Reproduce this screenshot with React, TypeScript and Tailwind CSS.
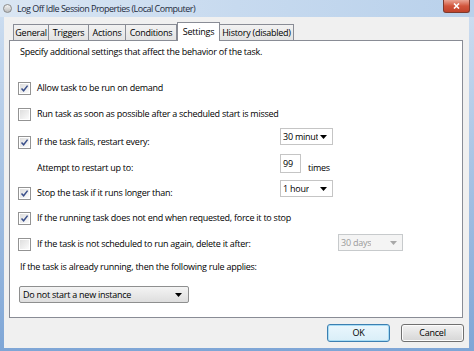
import React from 'react';

const Check: React.FC<{ checked?: boolean }> = ({ checked }) => (
  <div className="w-[13px] h-[13px] shrink-0 border border-[#939393] bg-white p-[1px]">
    <div className="w-full h-full bg-gradient-to-br from-[#dedede] to-[#fbfbfb] flex items-center justify-center">
      {checked && (
        <svg width="9" height="9" viewBox="0 0 9 9">
          <path d="M1.5 4.5 L3.6 6.8 L7.6 1.6" fill="none" stroke="#3a4f8a" strokeWidth="1.5" />
        </svg>
      )}
    </div>
  </div>
);

const CheckLine: React.FC<{ checked?: boolean; label: string }> = ({ checked, label }) => (
  <div className="h-4 flex items-center">
    <Check checked={checked} />
    <span className="ml-[6px] whitespace-nowrap">{label}</span>
  </div>
);

const Arrow: React.FC<{ color?: string }> = ({ color = '#000' }) => (
  <svg width="7" height="4" viewBox="0 0 7 4">
    <path d="M0 0 H7 L3.5 4 Z" fill={color} />
  </svg>
);

const Combo: React.FC<{ value: string; width: string; disabled?: boolean }> = ({ value, width, disabled }) => (
  <div
    className={`${width} h-[17px] flex items-center justify-between pl-[2px] pr-[5px] border ${
      disabled ? 'border-[#c7cacc] bg-[#f4f4f4] text-[#9a9a9a]' : 'border-[#c5c5c5] bg-white text-black'
    }`}
  >
    <span className="whitespace-nowrap overflow-hidden">{value}</span>
    <Arrow color={disabled ? '#a8a8a8' : '#000'} />
  </div>
);

const tabs = [
  { name: 'General', w: 'w-[36px]' },
  { name: 'Triggers', w: 'w-[41px]' },
  { name: 'Actions', w: 'w-[38px]' },
  { name: 'Conditions', w: 'w-[52px]' },
  { name: 'Settings', w: 'w-[43px]', active: true },
  { name: 'History (disabled)', w: 'w-[75px]' },
];

export default function App() {
  return (
    <div className="w-[474px] h-[351px] overflow-hidden flex flex-col bg-gradient-to-b from-[#cfdff1] to-[#7fa6d6] font-['Segoe_UI','Open_Sans',sans-serif] text-[9px] tracking-[-0.25px] leading-[16px] text-black">
      {/* title bar */}
      <div className="h-[17px] flex items-start bg-gradient-to-r from-[#dae6f3] via-[#c7daef] to-[#b9d1eb]">
        <div className="mt-[4px] ml-[3px] w-[9px] h-[9px] rounded-full border border-[#8a8a8a] bg-gradient-to-b from-[#f4f4f4] to-[#bcbcbc]" />
        <span className="ml-[5px] mt-[1px] text-[#1e2b3c] tracking-[-0.5px] whitespace-nowrap">Log Off Idle Session Properties (Local Computer)</span>
        <div className="ml-auto mr-[4px] w-[27px] h-[13px] rounded-b-[3px] border border-t-0 border-[#7d3a2e] bg-gradient-to-b from-[#e9a494] via-[#d1553c] to-[#c0432c] flex items-center justify-center">
          <svg width="7" height="6" viewBox="0 0 7 6">
            <path d="M1 0.5 L6 5.5 M6 0.5 L1 5.5" stroke="#fff" strokeWidth="1.6" />
          </svg>
        </div>
      </div>

      {/* window body */}
      <div className="flex-1 flex pl-[4px] pr-[5px] pb-[3px]">
        <div className="flex-1 bg-[#f0f0f0] flex flex-col pt-[5px] pb-[6px]">
          {/* tabs */}
          <div className="h-[18px] flex items-end pl-[9px] relative z-10">
            {tabs.map((t) =>
              t.active ? (
                <div
                  key={t.name}
                  className={`${t.w} h-[19px] -mb-px bg-white border border-b-0 border-[#898c95] flex items-center justify-center whitespace-nowrap`}
                >
                  {t.name}
                </div>
              ) : (
                <div
                  key={t.name}
                  className={`${t.w} h-[16px] bg-gradient-to-b from-[#f2f2f2] to-[#e3e3e3] border border-b-0 border-[#898c95] -ml-px first:ml-0 flex items-center justify-center whitespace-nowrap`}
                >
                  {t.name}
                </div>
              )
            )}
          </div>

          {/* panel */}
          <div className="ml-[5px] mr-[6px] h-[278px] bg-white border border-[#898c95] pl-[8px]">
            <div className="h-[39px] pt-[3px] pl-[2px] whitespace-nowrap">
              Specify additional settings that affect the behavior of the task.
            </div>
            <div className="h-[26px]">
              <CheckLine checked label="Allow task to be run on demand" />
            </div>
            <div className="h-[22px]">
              <CheckLine label="Run task as soon as possible after a scheduled start is missed" />
            </div>
            <div className="h-[26px] flex items-start">
              <div className="w-[262px] mt-[6px]">
                <CheckLine checked label="If the task fails, restart every:" />
              </div>
              <Combo value="30 minut" width="w-[53px]" />
            </div>
            <div className="h-[26px] flex items-start">
              <div className="w-[262px] mt-[6px] pl-[19px] whitespace-nowrap">Attempt to restart up to:</div>
              <div className="w-[21px] h-[19px] border border-[#c5c5c5] bg-white pl-[2px] pt-px">99</div>
              <span className="ml-[7px] mt-[6px]">times</span>
            </div>
            <div className="h-[30px] flex items-start">
              <div className="w-[262px] mt-[5px]">
                <CheckLine checked label="Stop the task if it runs longer than:" />
              </div>
              <Combo value="1 hour" width="w-[53px]" />
            </div>
            <div className="h-[24px]">
              <CheckLine checked label="If the running task does not end when requested, force it to stop" />
            </div>
            <div className="h-[25px] flex items-start">
              <div className="w-[320px] mt-[2px]">
                <CheckLine label="If the task is not scheduled to run again, delete it after:" />
              </div>
              <Combo value="30 days" width="w-[65px]" disabled />
            </div>
            <div className="h-[27px] pl-[2px] whitespace-nowrap">
              If the task is already running, then the following rule applies:
            </div>
            <div className="ml-[1px] w-[170px] h-[17px] rounded-[2px] border border-[#8e8f8f] bg-gradient-to-b from-[#f4f4f4] to-[#dedede] flex items-center justify-between pl-[3px] pr-[6px]">
              <span className="whitespace-nowrap">Do not start a new instance</span>
              <Arrow />
            </div>
          </div>

          {/* buttons */}
          <div className="mt-[6px] h-[18px] flex justify-end gap-[11px] pr-[5px]">
            <button className="w-[63px] h-[18px] rounded-[3px] border border-[#3c7fb1] bg-gradient-to-b from-[#eaf6fd] to-[#d9eef8] shadow-[inset_0_0_0_1px_#a7dcf5] leading-[16px]">
              OK
            </button>
            <button className="w-[63px] h-[18px] rounded-[3px] border border-[#707070] bg-gradient-to-b from-[#f2f2f2] to-[#d6d6d6] shadow-[inset_0_0_0_1px_#fcfcfc] leading-[16px]">
              Cancel
            </button>
          </div>
        </div>
      </div>
    </div>
  );
}
